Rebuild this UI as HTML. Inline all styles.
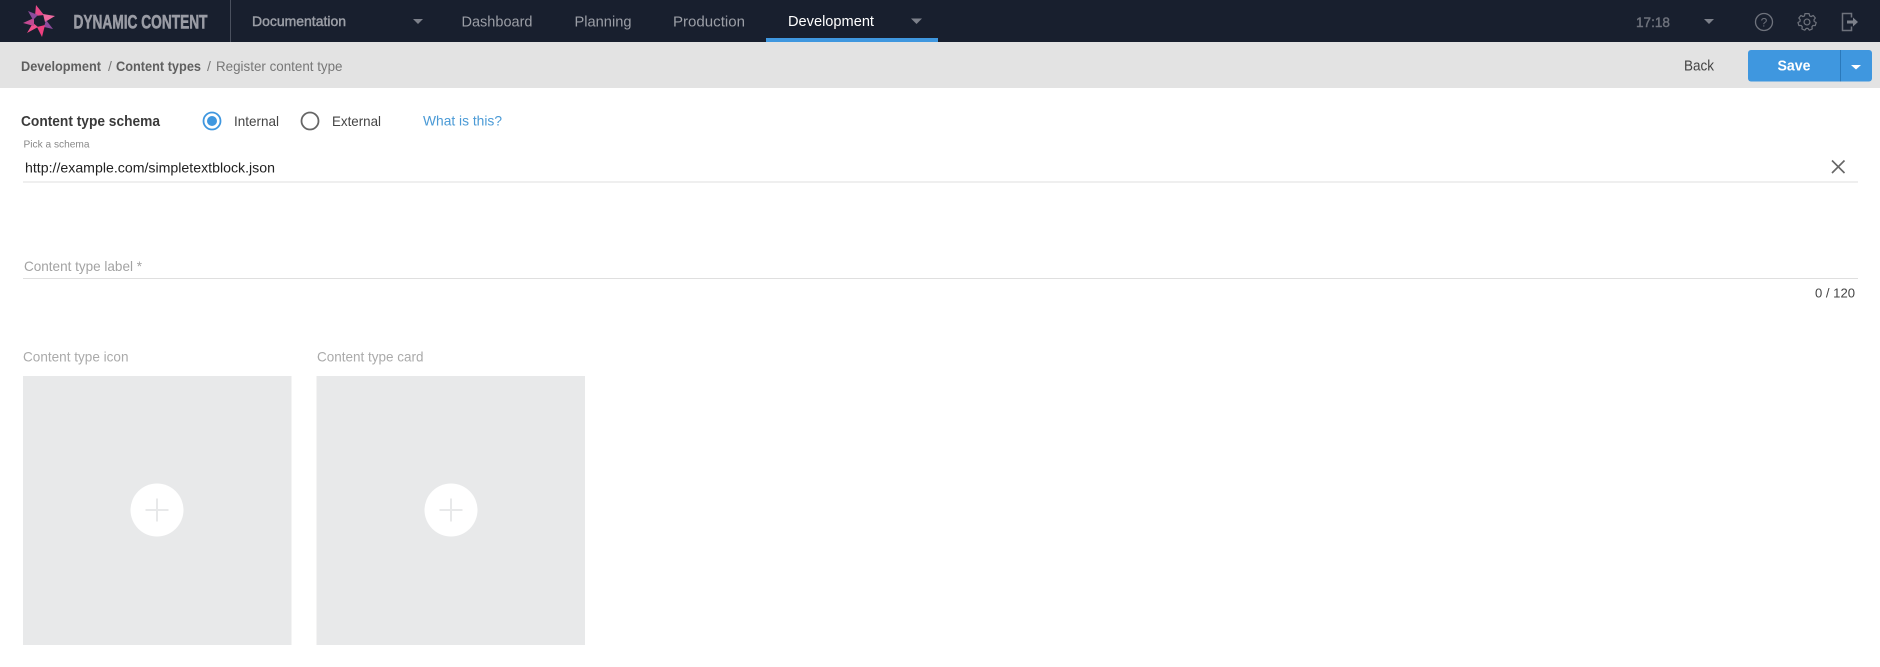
<!DOCTYPE html>
<html lang="en"><head><meta charset="utf-8"><title>Register content type</title>
<style>
html,body{margin:0;padding:0;background:#fff;width:1880px;height:667px;overflow:hidden}
svg{display:block}
text{font-family:"Liberation Sans",sans-serif;dominant-baseline:alphabetic}
</style></head><body>
<svg xmlns="http://www.w3.org/2000/svg" width="1880" height="667" viewBox="0 0 1880 667">
<rect width="1880" height="667" fill="#fff"/>
<rect width="1880" height="42" fill="#181f2e"/>
<rect y="42" width="1880" height="46" fill="#e3e3e3"/>

<!-- logo -->
<polygon points="36,5 35,16 44,15" fill="#e8488a"/>
<polygon points="55,16 43,14 45,22" fill="#ef6aa0"/>
<polygon points="53,29 46,20 44,27" fill="#8d4b9c"/>
<polygon points="42,37 45,25 37,27" fill="#ee3f7f"/>
<polygon points="27,33 38,27 33,23" fill="#f0508c"/>
<polygon points="23,23 34,26 34,18" fill="#c24a92"/>
<polygon points="28,11 33,20 38,15" fill="#8d4b9c"/>
<circle cx="39.500" cy="20.800" r="3.300" fill="#181f2e"/>
<text x="73.500" y="28.500" font-size="19" font-weight="700" fill="#9a9ca5" stroke="#9a9ca5" stroke-width=".55" textLength="134" lengthAdjust="spacingAndGlyphs">DYNAMIC CONTENT</text>
<rect x="230" y="0" width="1" height="42" fill="#4a505e"/>

<!-- nav -->
<text x="252" y="26" font-size="14" fill="#9b9ea6" stroke="#9b9ea6" stroke-width=".45" textLength="94" lengthAdjust="spacingAndGlyphs">Documentation</text>
<polygon points="413,19 423,19 418,24" fill="#7c808a"/>
<text x="461.500" y="26.500" font-size="15" fill="#9b9ea6" textLength="71" lengthAdjust="spacingAndGlyphs">Dashboard</text>
<text x="574.500" y="26.500" font-size="15" fill="#9b9ea6" textLength="57" lengthAdjust="spacingAndGlyphs">Planning</text>
<text x="673" y="26.500" font-size="15" fill="#9b9ea6" textLength="72" lengthAdjust="spacingAndGlyphs">Production</text>
<text x="788" y="26" font-size="15" fill="#ffffff" textLength="86" lengthAdjust="spacingAndGlyphs">Development</text>
<polygon points="911,18.500 922,18.500 916.500,24" fill="#7c808a"/>
<rect x="766" y="38" width="172" height="4" fill="#3f97df"/>

<!-- right header -->
<text x="1636" y="27" font-size="14" fill="#6e727c" stroke="#6e727c" stroke-width=".4" textLength="34" lengthAdjust="spacingAndGlyphs">17:18</text>
<polygon points="1704,19 1714,19 1709,24" fill="#7c808a"/>
<circle cx="1764" cy="22" r="8.500" fill="none" stroke="#6e727c" stroke-width="1.300"/>
<text x="1764" y="26.500" font-size="12" fill="#6e727c" text-anchor="middle">?</text>
<g fill="none" stroke="#6e727c" stroke-width="1.400" stroke-linejoin="round" transform="translate(1807 22) scale(.86) translate(-1807 -22)">
<path d="M1804.600 13.200h4.800l.7 2.600 1.800.8 2.400-1.300 2.400 2.900-1.600 2.100.3 2 2.300 1.200-1.100 3.500-2.600-.1-1.300 1.500.4 2.600-3.400 1.400-1.600-2.100h-2l-1.600 2.100-3.400-1.400.4-2.600-1.300-1.500-2.600.1-1.100-3.500 2.300-1.200.3-2-1.600-2.100 2.400-2.900 2.400 1.300 1.800-.8z" transform="translate(0 -.9)"/>
<circle cx="1807" cy="22" r="3.400"/>
</g>
<path d="M1851.500 17.500v-4h-9v17h9v-4" fill="none" stroke="#6e727c" stroke-width="1.500"/>
<path d="M1847 20.500h6v-3l5 4.500-5 4.500v-3h-6z" fill="#7c808a"/>

<!-- breadcrumb -->
<text x="21" y="71" font-size="14" font-weight="700" fill="#5f5f5f" textLength="80" lengthAdjust="spacingAndGlyphs">Development</text>
<text x="108" y="71" font-size="14" fill="#777">/</text>
<text x="116" y="71" font-size="14" font-weight="700" fill="#5f5f5f" textLength="85" lengthAdjust="spacingAndGlyphs">Content types</text>
<text x="207" y="71" font-size="14" fill="#777">/</text>
<text x="216" y="71" font-size="14" fill="#777" textLength="126.500" lengthAdjust="spacingAndGlyphs">Register content type</text>

<!-- actions -->
<text x="1684" y="70.500" font-size="14.500" fill="#444" textLength="30" lengthAdjust="spacingAndGlyphs">Back</text>
<rect x="1748" y="50" width="124" height="31.500" rx="3" fill="#3f97df"/>
<rect x="1840" y="50" width="1" height="31.500" fill="#2a79bb"/>
<text x="1794" y="70.500" font-size="15" font-weight="700" fill="#fff" text-anchor="middle" textLength="33" lengthAdjust="spacingAndGlyphs">Save</text>
<polygon points="1851,65 1861,65 1856,69.500" fill="#fff"/>

<!-- schema row -->
<text x="21" y="126" font-size="14.500" font-weight="700" fill="#3a3a3a" textLength="139" lengthAdjust="spacingAndGlyphs">Content type schema</text>
<circle cx="212" cy="121" r="8.500" fill="none" stroke="#3f97df" stroke-width="1.800"/>
<circle cx="212" cy="121" r="5" fill="#3f97df"/>
<text x="234" y="126" font-size="14" fill="#444" textLength="45" lengthAdjust="spacingAndGlyphs">Internal</text>
<circle cx="310" cy="121" r="8.500" fill="none" stroke="#666" stroke-width="1.800"/>
<text x="332" y="126" font-size="14" fill="#444" textLength="49" lengthAdjust="spacingAndGlyphs">External</text>
<text x="423" y="125.500" font-size="14" fill="#4a9ad6" textLength="79" lengthAdjust="spacingAndGlyphs">What is this?</text>

<text x="23.500" y="147.500" font-size="10.500" fill="#888" textLength="66" lengthAdjust="spacingAndGlyphs">Pick a schema</text>
<text x="25" y="172.500" font-size="14" fill="#222" textLength="250" lengthAdjust="spacingAndGlyphs">http://example.com/simpletextblock.json</text>
<rect x="23" y="181.500" width="1835" height="1" fill="#dfdfdf"/>
<path d="M1832 160.500l12.500 12.500M1844.500 160.500l-12.500 12.500" stroke="#666" stroke-width="1.600" fill="none"/>

<text x="24" y="271" font-size="14" fill="#a3a3a3" textLength="118" lengthAdjust="spacingAndGlyphs">Content type label *</text>
<rect x="23" y="278" width="1835" height="1" fill="#dfdfdf"/>
<text x="1815" y="297.500" font-size="13" fill="#444" textLength="40" lengthAdjust="spacingAndGlyphs">0 / 120</text>

<!-- uploads -->
<text x="23" y="361.500" font-size="14" fill="#aaa" textLength="105.500" lengthAdjust="spacingAndGlyphs">Content type icon</text>
<text x="317" y="361.500" font-size="14" fill="#aaa" textLength="106.500" lengthAdjust="spacingAndGlyphs">Content type card</text>

<rect x="23" y="376" width="268.500" height="269" fill="#e8e9ea"/>
<circle cx="157" cy="510" r="26.500" fill="#fff"/>
<rect x="145.500" y="509" width="23" height="2" fill="#e8e9ea"/>
<rect x="156" y="498.500" width="2" height="23" fill="#e8e9ea"/>

<rect x="316.500" y="376" width="268.500" height="269" fill="#e8e9ea"/>
<circle cx="451" cy="510" r="26.500" fill="#fff"/>
<rect x="439.500" y="509" width="23" height="2" fill="#e8e9ea"/>
<rect x="450" y="498.500" width="2" height="23" fill="#e8e9ea"/>
</svg>
</body></html>
